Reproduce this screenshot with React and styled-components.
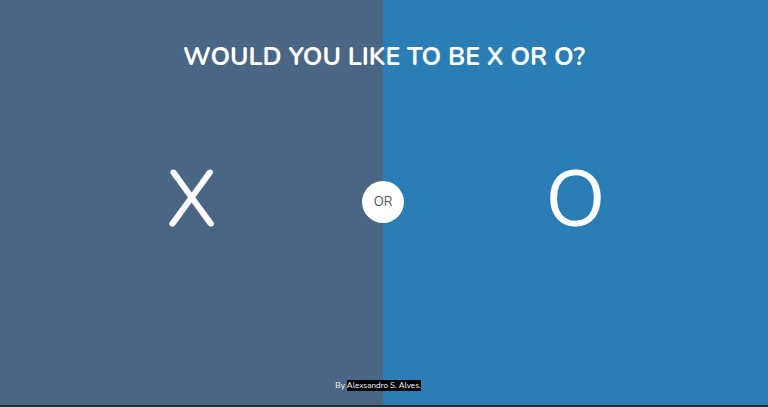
import React from "react";
import styled, { createGlobalStyle } from "styled-components";

const GlobalStyle = createGlobalStyle`
  html, body {
    margin: 0;
    padding: 0;
    background: #2d2d2d;
  }
  * {
    box-sizing: border-box;
  }
  body {
    font-family: "Nunito", "Lato", "Open Sans", sans-serif;
  }
`;

const Screen = styled.div`
  position: relative;
  display: flex;
  height: 405px;
  width: 100%;
  color: #fff;
`;

const Side = styled.button`
  flex: ${(p) => (p.left ? "0 0 383px" : "1 1 auto")};
  display: flex;
  align-items: center;
  justify-content: center;
  border: none;
  margin: 0;
  padding: 0 0 4px;
  background: ${(p) => (p.left ? "#4b6584" : "#2a7db5")};
  color: #fff;
  font-family: inherit;
  font-size: 78px;
  font-weight: 400;
  line-height: 1;
  cursor: pointer;
`;

const Title = styled.h1`
  position: absolute;
  top: 45px;
  left: 0;
  right: 0;
  margin: 0;
  text-align: center;
  font-size: 25px;
  font-weight: 700;
  line-height: 1;
  pointer-events: none;
`;

const Or = styled.div`
  position: absolute;
  top: 181px;
  left: 362px;
  width: 42px;
  height: 42px;
  border-radius: 50%;
  background: #fff;
  color: #555;
  display: flex;
  align-items: center;
  justify-content: center;
  font-size: 13px;
`;

const Footer = styled.footer`
  position: absolute;
  left: 0;
  right: 0;
  bottom: 14px;
  text-align: center;
  font-size: 8px;
  color: #fff;
  padding-right: 12px;
`;

const Author = styled.span`
  background: #000;
  color: #fff;
`;

export default function App() {
  return (
    <>
      <GlobalStyle />
      <Screen>
        <Side left>X</Side>
        <Side>O</Side>
        <Title>WOULD YOU LIKE TO BE X OR O?</Title>
        <Or>OR</Or>
        <Footer>
          By <Author>Alexsandro S. Alves.</Author>
        </Footer>
      </Screen>
    </>
  );
}
